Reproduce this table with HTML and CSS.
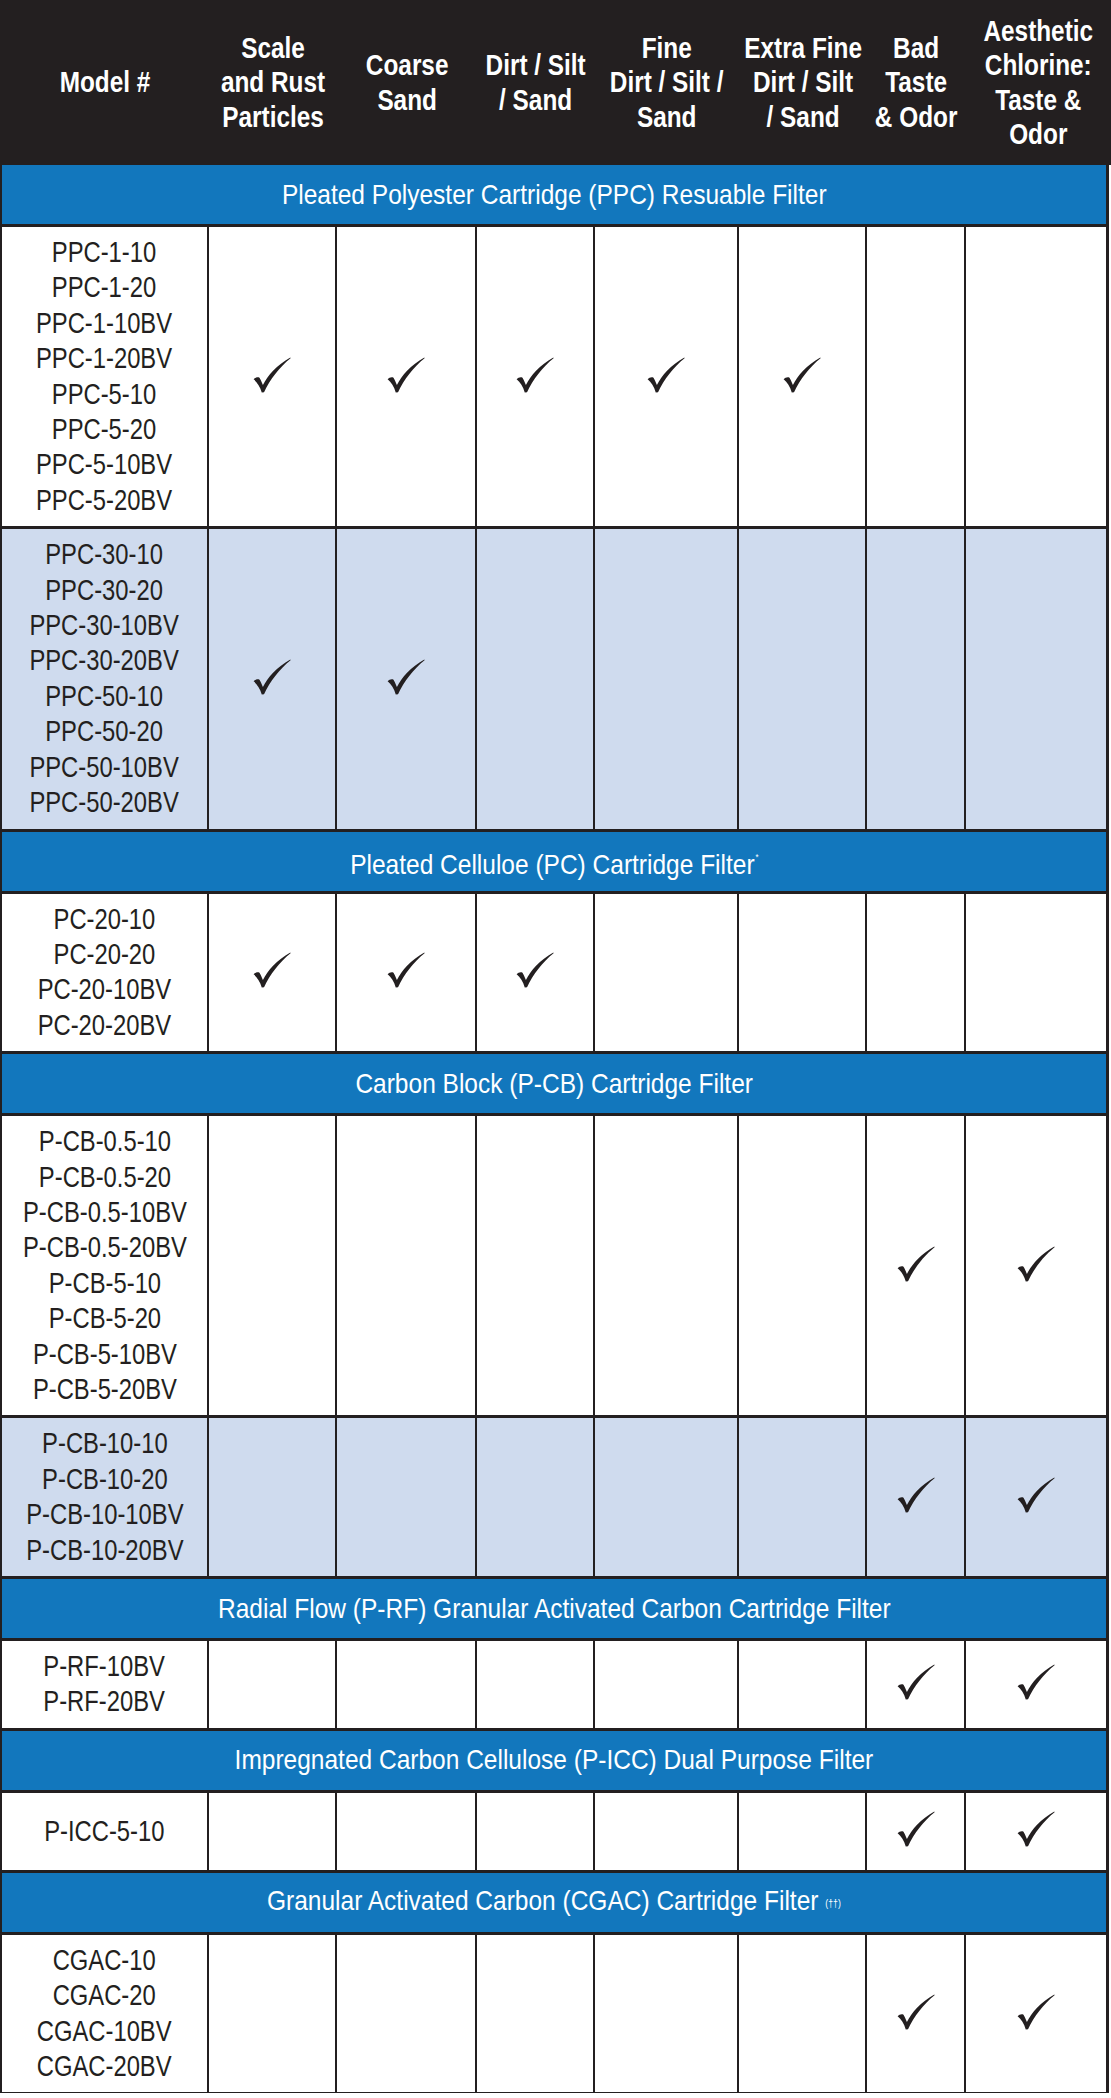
FILE: index.html
```html
<!DOCTYPE html>
<html lang="en">
<head>
<meta charset="utf-8">
<title>Filter Selection Chart</title>
<link rel="stylesheet" href="styles.css">
</head>
<body>
<svg width="0" height="0" class="defs" aria-hidden="true">
  <defs>
    <symbol id="chk" viewBox="0 0 40 38">
      <path d="M0.6 23.6 C2.2 21.6 5 20.6 6.8 21.8 C8 23.4 9.2 26.6 10.4 29.6 C15.5 19.6 25 8.6 39.4 0.6 L39.6 1.2 C27.5 11 18 23.5 11.6 37.2 L9.2 37.4 C7.4 31.4 4.4 26.6 0.6 23.6 Z"/>
    </symbol>
  </defs>
</svg>
<div class="chart">
  <div class="head">
    <div class="hc"><span class="ht">Model #</span></div>
    <div class="hc"><span class="ht">Scale<br>and Rust<br>Particles</span></div>
    <div class="hc"><span class="ht">Coarse<br>Sand</span></div>
    <div class="hc"><span class="ht">Dirt / Silt<br>/ Sand</span></div>
    <div class="hc"><span class="ht">Fine<br>Dirt / Silt /<br>Sand</span></div>
    <div class="hc"><span class="ht">Extra Fine<br>Dirt / Silt<br>/ Sand</span></div>
    <div class="hc"><span class="ht">Bad<br>Taste<br>&amp; Odor</span></div>
    <div class="hc"><span class="ht">Aesthetic<br>Chlorine:<br>Taste &amp;<br>Odor</span></div>
  </div>
  <div class="table">
    <div class="band"><span class="bt">Pleated Polyester Cartridge (PPC) Resuable Filter</span></div>
    <div class="row">
      <div class="cell model"><span class="mt">PPC-1-10<br>PPC-1-20<br>PPC-1-10BV<br>PPC-1-20BV<br>PPC-5-10<br>PPC-5-20<br>PPC-5-10BV<br>PPC-5-20BV</span></div>
      <div class="cell"><svg class="check"><use href="#chk"/></svg></div>
      <div class="cell"><svg class="check"><use href="#chk"/></svg></div>
      <div class="cell"><svg class="check"><use href="#chk"/></svg></div>
      <div class="cell"><svg class="check"><use href="#chk"/></svg></div>
      <div class="cell"><svg class="check"><use href="#chk"/></svg></div>
      <div class="cell"></div>
      <div class="cell"></div>
    </div>
    <div class="row alt">
      <div class="cell model"><span class="mt">PPC-30-10<br>PPC-30-20<br>PPC-30-10BV<br>PPC-30-20BV<br>PPC-50-10<br>PPC-50-20<br>PPC-50-10BV<br>PPC-50-20BV</span></div>
      <div class="cell"><svg class="check"><use href="#chk"/></svg></div>
      <div class="cell"><svg class="check"><use href="#chk"/></svg></div>
      <div class="cell"></div>
      <div class="cell"></div>
      <div class="cell"></div>
      <div class="cell"></div>
      <div class="cell"></div>
    </div>
    <div class="band"><span class="bt">Pleated Celluloe (PC) Cartridge Filter<span class="mark">*</span></span></div>
    <div class="row">
      <div class="cell model"><span class="mt">PC-20-10<br>PC-20-20<br>PC-20-10BV<br>PC-20-20BV</span></div>
      <div class="cell"><svg class="check"><use href="#chk"/></svg></div>
      <div class="cell"><svg class="check"><use href="#chk"/></svg></div>
      <div class="cell"><svg class="check"><use href="#chk"/></svg></div>
      <div class="cell"></div>
      <div class="cell"></div>
      <div class="cell"></div>
      <div class="cell"></div>
    </div>
    <div class="band"><span class="bt">Carbon Block (P-CB) Cartridge Filter</span></div>
    <div class="row">
      <div class="cell model"><span class="mt">P-CB-0.5-10<br>P-CB-0.5-20<br>P-CB-0.5-10BV<br>P-CB-0.5-20BV<br>P-CB-5-10<br>P-CB-5-20<br>P-CB-5-10BV<br>P-CB-5-20BV</span></div>
      <div class="cell"></div>
      <div class="cell"></div>
      <div class="cell"></div>
      <div class="cell"></div>
      <div class="cell"></div>
      <div class="cell"><svg class="check"><use href="#chk"/></svg></div>
      <div class="cell"><svg class="check"><use href="#chk"/></svg></div>
    </div>
    <div class="row alt">
      <div class="cell model"><span class="mt">P-CB-10-10<br>P-CB-10-20<br>P-CB-10-10BV<br>P-CB-10-20BV</span></div>
      <div class="cell"></div>
      <div class="cell"></div>
      <div class="cell"></div>
      <div class="cell"></div>
      <div class="cell"></div>
      <div class="cell"><svg class="check"><use href="#chk"/></svg></div>
      <div class="cell"><svg class="check"><use href="#chk"/></svg></div>
    </div>
    <div class="band"><span class="bt">Radial Flow (P-RF) Granular Activated Carbon Cartridge Filter</span></div>
    <div class="row">
      <div class="cell model"><span class="mt">P-RF-10BV<br>P-RF-20BV</span></div>
      <div class="cell"></div>
      <div class="cell"></div>
      <div class="cell"></div>
      <div class="cell"></div>
      <div class="cell"></div>
      <div class="cell"><svg class="check"><use href="#chk"/></svg></div>
      <div class="cell"><svg class="check"><use href="#chk"/></svg></div>
    </div>
    <div class="band"><span class="bt">Impregnated Carbon Cellulose (P-ICC) Dual Purpose Filter</span></div>
    <div class="row">
      <div class="cell model"><span class="mt">P-ICC-5-10</span></div>
      <div class="cell"></div>
      <div class="cell"></div>
      <div class="cell"></div>
      <div class="cell"></div>
      <div class="cell"></div>
      <div class="cell"><svg class="check"><use href="#chk"/></svg></div>
      <div class="cell"><svg class="check"><use href="#chk"/></svg></div>
    </div>
    <div class="band"><span class="bt">Granular Activated Carbon (CGAC) Cartridge Filter <span class="note">(††)</span></span></div>
    <div class="row last">
      <div class="cell model"><span class="mt">CGAC-10<br>CGAC-20<br>CGAC-10BV<br>CGAC-20BV</span></div>
      <div class="cell"></div>
      <div class="cell"></div>
      <div class="cell"></div>
      <div class="cell"></div>
      <div class="cell"></div>
      <div class="cell"><svg class="check"><use href="#chk"/></svg></div>
      <div class="cell"><svg class="check"><use href="#chk"/></svg></div>
    </div>
  </div>
</div>
</body>
</html>
```
FILE: styles.css
```css
* { box-sizing: border-box; }

html, body {
  margin: 0;
  padding: 0;
  background: #ffffff;
}

.defs {
  position: absolute;
  width: 0;
  height: 0;
  overflow: hidden;
}

.chart {
  width: 1111px;
  font-family: "Liberation Sans", Arial, sans-serif;
  color: #231f20;
}

.head {
  display: grid;
  grid-template-columns: 209px 128px 140px 118px 144px 128px 99px 145px;
  height: 165px;
  background: #231f20;
  color: #ffffff;
}

.hc {
  display: flex;
  align-items: center;
  justify-content: center;
  text-align: center;
  white-space: nowrap;
  min-width: 0;
}

.ht {
  display: inline-block;
  font-weight: 700;
  font-size: 29px;
  line-height: 34.5px;
  transform: scaleX(0.84);
}

.table {
  width: 1109px;
  border-left: 2px solid #231f20;
  border-right: 3px solid #231f20;
}

.band {
  height: 62px;
  background: #1277bd;
  border-bottom: 3px solid #231f20;
  color: #ffffff;
  display: flex;
  align-items: center;
  justify-content: center;
  white-space: nowrap;
}

.bt {
  display: inline-block;
  font-size: 28px;
  line-height: 34px;
  transform: scaleX(0.875);
}

.mark {
  font-size: 9px;
  vertical-align: 14px;
  margin-left: 1px;
}

.note {
  font-size: 10px;
  vertical-align: 3px;
}

.row {
  display: grid;
  grid-template-columns: 207px 128px 140px 118px 144px 128px 99px 140px;
  border-bottom: 3px solid #231f20;
  background: #ffffff;
  min-height: 80px;
}

.row.alt {
  background: #cfdbee;
}

.row.last {
  border-bottom: 1px solid #231f20;
}

.cell {
  display: flex;
  align-items: center;
  justify-content: center;
  border-right: 2px solid #231f20;
  min-width: 0;
}

.cell:last-child {
  border-right: none;
}

.model {
  padding: 8px 0;
  white-space: nowrap;
}

.mt {
  display: inline-block;
  font-size: 29px;
  line-height: 35.4px;
  text-align: center;
  transform: scaleX(0.82);
}

.check {
  width: 38px;
  height: 36px;
  fill: #231f20;
  margin-top: -4px;
}
```
